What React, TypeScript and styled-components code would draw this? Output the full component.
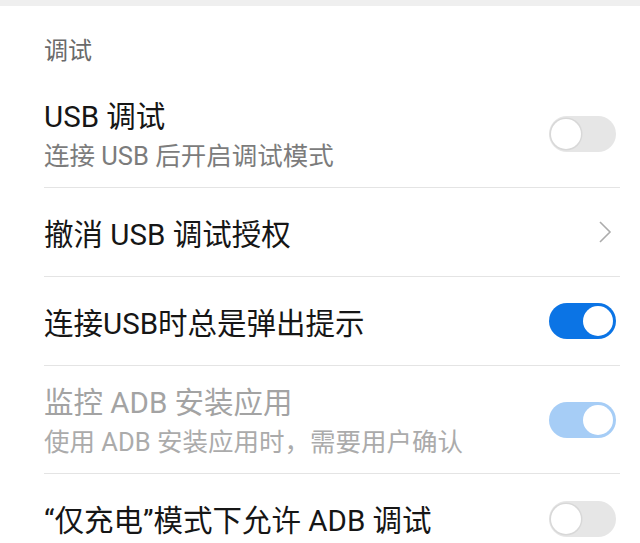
import styled, { createGlobalStyle } from "styled-components";

const GlobalStyle = createGlobalStyle`
  html, body {
    margin: 0;
    padding: 0;
    background: #ffffff;
  }
  body {
    font-family: Roboto, "Noto Sans CJK SC", sans-serif;
  }
`;

type Item = {
  title: string;
  sub?: string;
  kind: "switch" | "link";
  on?: boolean;
  disabled?: boolean;
};

const items: Item[] = [
  { title: "USB 调试", sub: "连接 USB 后开启调试模式", kind: "switch", on: false },
  { title: "撤消 USB 调试授权", kind: "link" },
  { title: "连接USB时总是弹出提示", kind: "switch", on: true },
  {
    title: "监控 ADB 安装应用",
    sub: "使用 ADB 安装应用时，需要用户确认",
    kind: "switch",
    on: true,
    disabled: true,
  },
  { title: "“仅充电”模式下允许 ADB 调试", kind: "switch", on: false },
];

function App() {
  return (
    <>
      <GlobalStyle />
      <Page>
        <TopBand />
        <List>
          <SectionTitle>调试</SectionTitle>
          {items.map((item, i) => (
            <Row key={i} $tall={!!item.sub} $last={i === items.length - 1}>
              <TextBox>
                <Title $disabled={item.disabled}>{item.title}</Title>
                {item.sub && <Sub $disabled={item.disabled}>{item.sub}</Sub>}
              </TextBox>
              {item.kind === "switch" ? (
                <Switch $on={!!item.on} $disabled={item.disabled}>
                  <Knob $on={!!item.on} />
                </Switch>
              ) : (
                <Chevron viewBox="0 0 14 24">
                  <path d="M2 2 L12 12 L2 22" fill="none" stroke="#acacac" strokeWidth="1.6" />
                </Chevron>
              )}
            </Row>
          ))}
        </List>
      </Page>
    </>
  );
}

export default App;

const Page = styled.div`
  width: 640px;
  height: 543px;
  overflow: hidden;
  background: #fff;
`;

const TopBand = styled.div`
  height: 6px;
  background: #efefef;
`;

const List = styled.div`
  display: flex;
  flex-direction: column;
  padding: 0 20px 0 44px;
`;

const SectionTitle = styled.div`
  height: 74px;
  display: flex;
  align-items: center;
  padding-top: 10px;
  box-sizing: border-box;
  font-size: 24px;
  color: #6a6a6a;
`;

const Row = styled.div<{ $tall: boolean; $last: boolean }>`
  display: flex;
  align-items: center;
  justify-content: space-between;
  height: ${(p) => (p.$tall ? 108 : 89)}px;
  box-sizing: border-box;
  border-bottom: ${(p) => (p.$last ? "none" : "1.5px solid #e4e4e4")};
`;

const TextBox = styled.div`
  display: flex;
  flex-direction: column;
  gap: 2px;
  padding-top: 5px;
`;

const Title = styled.div<{ $disabled?: boolean }>`
  font-size: 29.5px;
  line-height: 38px;
  color: ${(p) => (p.$disabled ? "#a3a3a3" : "#161616")};
`;

const Sub = styled.div<{ $disabled?: boolean }>`
  font-size: 25.5px;
  line-height: 36px;
  color: ${(p) => (p.$disabled ? "#ababab" : "#7c7c7c")};
`;

const Switch = styled.div<{ $on: boolean; $disabled?: boolean }>`
  position: relative;
  width: 67px;
  height: 36px;
  margin-right: 4px;
  border-radius: 18px;
  flex-shrink: 0;
  background: ${(p) =>
    p.$on ? (p.$disabled ? "#a6cdf6" : "#0b74e5") : "#e6e6e6"};
`;

const Knob = styled.div<{ $on: boolean }>`
  position: absolute;
  top: 3px;
  left: ${(p) => (p.$on ? "34px" : "2px")};
  width: 30px;
  height: 30px;
  border-radius: 50%;
  background: #fff;
  box-shadow: ${(p) => (p.$on ? "none" : "0 0 0 1.5px #d8d8d8")};
`;

const Chevron = styled.svg`
  width: 14px;
  height: 24px;
  margin-right: 8px;
`;
